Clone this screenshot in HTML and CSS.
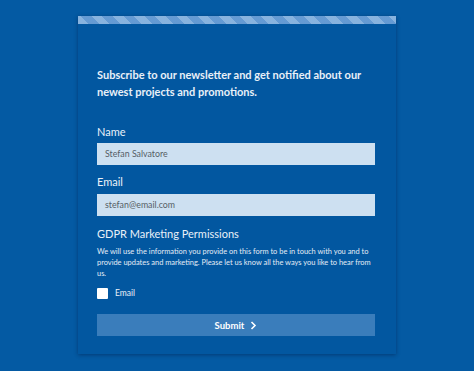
FILE: index.html
```html
<!DOCTYPE html>
<html>
<head>
<meta charset="utf-8">
<link rel="stylesheet" href="styles.css">
</head>
<body>
<div class="card">
  <div class="stripe"></div>
  <form class="form">
    <h2 class="intro">Subscribe to our newsletter and get notified about our newest projects and promotions.</h2>
    <label class="label">Name</label>
    <div class="input">Stefan Salvatore</div>
    <label class="label">Email</label>
    <div class="input input-email">stefan@email.com</div>
    <h3 class="gdpr-title">GDPR Marketing Permissions</h3>
    <p class="gdpr-text">We will use the information you provide on this form to be in touch with you and to provide updates and marketing. Please let us know all the ways you like to hear from us.</p>
    <div class="check-row"><span class="box"></span><span class="check-label">Email</span></div>
    <div class="submit">Submit <svg class="chev" width="7" height="9" viewBox="0 0 7 9"><path d="M1.5 1 L5 4.5 L1.5 8" fill="none" stroke="#ffffff" stroke-width="1.6"/></svg></div>
  </form>
</div>
</body>
</html>
```
FILE: styles.css
```css
html, body { margin: 0; padding: 0; }
body {
  background: #045aa3;
  font-family: Lato, "Open Sans", sans-serif;
  color: #e8f0f8;
  width: 474px;
  height: 371px;
  overflow: hidden;
}
.card {
  width: 318px;
  margin: 16px auto 0;
  background: #0257a0;
  box-shadow: 0 1px 4px rgba(0, 20, 60, 0.45);
  padding-bottom: 18px;
}
.stripe {
  height: 8px;
  background: repeating-linear-gradient(45deg, #8fb8e2 0 7.5px, #6a9ed6 7.5px 15px);
  opacity: 0.95;
}
.form {
  padding: 42px 19px 0 19px;
  display: flex;
  flex-direction: column;
}
.intro {
  margin: 0;
  font-size: 11px;
  font-weight: 700;
  line-height: 17px;
  color: #e9f0f8;
}
.label {
  margin-top: 24px;
  font-size: 11px;
  line-height: 16px;
  color: #eaf1f9;
}
.label + .input { margin-top: 3px; }
.label + .input-email { margin-top: 4px; }
.input + .label { margin-top: 9px; }
.input {
  width: 270px;
  height: 22px;
  background: #cde0f1;
  color: #555e66;
  font-size: 8.8px;
  line-height: 22px;
  padding-left: 8px;
}
.gdpr-title {
  margin: 10px 0 0;
  font-size: 11px;
  font-weight: 400;
  line-height: 16px;
  color: #e9f0f8;
}
.gdpr-text {
  margin: 4px 0 0;
  width: 280px;
  font-size: 7.45px;
  line-height: 11px;
  color: #e3ecf6;
}
.check-row {
  display: flex;
  align-items: center;
  margin-top: 8px;
  height: 12px;
}
.box {
  width: 11px;
  height: 11px;
  background: #ffffff;
  border-radius: 1px;
}
.check-label {
  margin-left: 7px;
  font-size: 8.5px;
  color: #e9f0f8;
}
.submit {
  width: 278px;
  margin-top: 15px;
  height: 22px;
  background: #3a7dbb;
  color: #ffffff;
  font-size: 9.5px;
  font-weight: 700;
  display: flex;
  align-items: center;
  justify-content: center;
  gap: 6px;
}
.chev { display: block; }
```
